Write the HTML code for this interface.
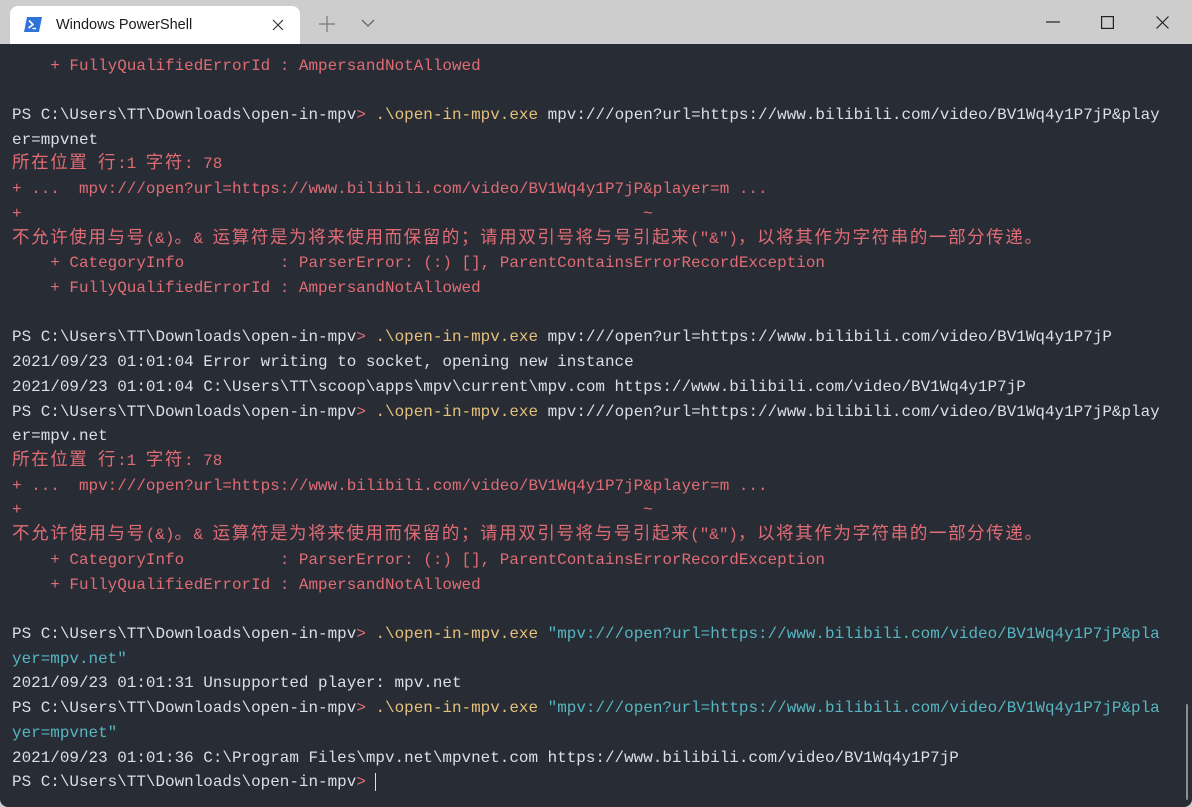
<!DOCTYPE html>
<html><head><meta charset="utf-8"><style>
html,body{margin:0;padding:0;width:1192px;height:807px;overflow:hidden;background:#cdcdcd;}
.win{position:absolute;left:0;top:0;width:1192px;height:807px;background:#cdcdcd;border-radius:8px;overflow:hidden;}
.tab{position:absolute;left:10px;top:6px;width:290px;height:38px;background:#fff;border-radius:8px 8px 0 0;font-family:"Liberation Sans",sans-serif;font-size:14.5px;color:#1a1a1a;}
.tab .t{position:absolute;left:46px;top:11px;}
.term{position:absolute;left:0;top:44px;width:1192px;height:763px;background:#282c34;}
.lines{position:absolute;left:12px;top:9.5px;font-family:"Liberation Mono","Noto Sans CJK SC",monospace;font-size:15.95px;color:#dcdfe4;}
.lines div{height:24.72px;line-height:24.72px;white-space:pre;overflow:visible;}
.r{color:#e06c75}.y{color:#e5c07b}.c{color:#56b6c2}
.k{font-size:17.5px;letter-spacing:1.6px;line-height:10px}
.sb{position:absolute;right:4px;top:660px;width:2px;height:96px;background:#8a8d92;border-radius:1px;}
</style></head><body><div class="win">
<div class="tab">
<svg style="position:absolute;left:14px;top:11px" width="18" height="15" viewBox="0 0 18 15"><path d="M3 0H18L15 15H0Z" fill="#2f73d8"/><path d="M5 3.5L9 7.5L4.5 11" stroke="#fff" stroke-width="1.6" fill="none"/><path d="M8.5 11.5H12" stroke="#fff" stroke-width="1.5"/></svg>
<span class="t">Windows PowerShell</span>
<svg style="position:absolute;left:262px;top:13px" width="12" height="12"><path d="M1 1L11 11M11 1L1 11" stroke="#333" stroke-width="1.2"/></svg>
</div>
<svg style="position:absolute;left:319px;top:16px" width="16" height="16"><path d="M8 0V16M0 8H16" stroke="#777" stroke-width="1.2"/></svg>
<svg style="position:absolute;left:361px;top:19px" width="14" height="9"><path d="M1 1L7 7L13 1" stroke="#666" stroke-width="1.3" fill="none"/></svg>
<svg style="position:absolute;left:1046px;top:21px" width="14" height="2"><path d="M0 1H14" stroke="#222" stroke-width="1.2"/></svg>
<svg style="position:absolute;left:1101px;top:16px" width="13" height="13"><rect x="0.6" y="0.6" width="11.8" height="11.8" fill="none" stroke="#222" stroke-width="1.2"/></svg>
<svg style="position:absolute;left:1156px;top:16px" width="13" height="13"><path d="M0.5 0.5L12.5 12.5M12.5 0.5L0.5 12.5" stroke="#222" stroke-width="1.2"/></svg>
<div class="term">
<div class="lines"><div class="r">    + FullyQualifiedErrorId : AmpersandNotAllowed</div><div> </div><div>PS C:\Users\TT\Downloads\open-in-mpv<span class="r">&gt;</span> <span class="y">.\open-in-mpv.exe</span> mpv:///open?url=https://www.bilibili.com/video/BV1Wq4y1P7jP&amp;play</div><div>er=mpvnet</div><div class="r"><span class="k">所在位置</span> <span class="k">行</span>:1 <span class="k">字符</span>: 78</div><div class="r">+ ...  mpv:///open?url=https://www.bilibili.com/video/BV1Wq4y1P7jP&amp;player=m ...</div><div class="r">+                                                                 ~</div><div class="r"><span class="k">不允许使用与号</span>(&amp;)<span class="k">。</span>&amp; <span class="k">运算符是为将来使用而保留的；请用双引号将与号引起来</span>("&amp;")<span class="k">，以将其作为字符串的一部分传递。</span></div><div class="r">    + CategoryInfo          : ParserError: (:) [], ParentContainsErrorRecordException</div><div class="r">    + FullyQualifiedErrorId : AmpersandNotAllowed</div><div> </div><div>PS C:\Users\TT\Downloads\open-in-mpv<span class="r">&gt;</span> <span class="y">.\open-in-mpv.exe</span> mpv:///open?url=https://www.bilibili.com/video/BV1Wq4y1P7jP</div><div>2021/09/23 01:01:04 Error writing to socket, opening new instance</div><div>2021/09/23 01:01:04 C:\Users\TT\scoop\apps\mpv\current\mpv.com https://www.bilibili.com/video/BV1Wq4y1P7jP</div><div>PS C:\Users\TT\Downloads\open-in-mpv<span class="r">&gt;</span> <span class="y">.\open-in-mpv.exe</span> mpv:///open?url=https://www.bilibili.com/video/BV1Wq4y1P7jP&amp;play</div><div>er=mpv.net</div><div class="r"><span class="k">所在位置</span> <span class="k">行</span>:1 <span class="k">字符</span>: 78</div><div class="r">+ ...  mpv:///open?url=https://www.bilibili.com/video/BV1Wq4y1P7jP&amp;player=m ...</div><div class="r">+                                                                 ~</div><div class="r"><span class="k">不允许使用与号</span>(&amp;)<span class="k">。</span>&amp; <span class="k">运算符是为将来使用而保留的；请用双引号将与号引起来</span>("&amp;")<span class="k">，以将其作为字符串的一部分传递。</span></div><div class="r">    + CategoryInfo          : ParserError: (:) [], ParentContainsErrorRecordException</div><div class="r">    + FullyQualifiedErrorId : AmpersandNotAllowed</div><div> </div><div>PS C:\Users\TT\Downloads\open-in-mpv<span class="r">&gt;</span> <span class="y">.\open-in-mpv.exe</span> <span class="c">"mpv:///open?url=https://www.bilibili.com/video/BV1Wq4y1P7jP&amp;pla</span></div><div class="c">yer=mpv.net"</div><div>2021/09/23 01:01:31 Unsupported player: mpv.net</div><div>PS C:\Users\TT\Downloads\open-in-mpv<span class="r">&gt;</span> <span class="y">.\open-in-mpv.exe</span> <span class="c">"mpv:///open?url=https://www.bilibili.com/video/BV1Wq4y1P7jP&amp;pla</span></div><div class="c">yer=mpvnet"</div><div>2021/09/23 01:01:36 C:\Program Files\mpv.net\mpvnet.com https://www.bilibili.com/video/BV1Wq4y1P7jP</div><div>PS C:\Users\TT\Downloads\open-in-mpv<span class="r">&gt;</span> <span style="border-left:1.5px solid #dcdfe4"> </span></div></div>
<div class="sb"></div>
</div>
</div></body></html>
